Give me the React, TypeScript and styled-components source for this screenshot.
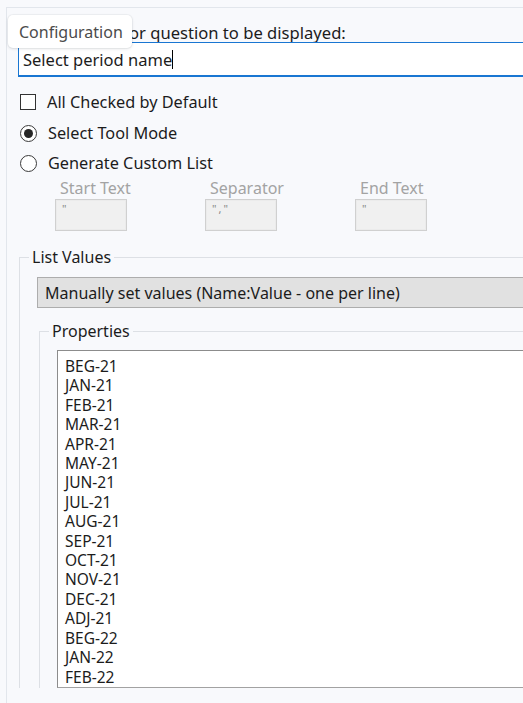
import React from 'react';
import styled, { createGlobalStyle } from 'styled-components';

const periods = [
  'BEG-21', 'JAN-21', 'FEB-21', 'MAR-21', 'APR-21', 'MAY-21', 'JUN-21', 'JUL-21',
  'AUG-21', 'SEP-21', 'OCT-21', 'NOV-21', 'DEC-21', 'ADJ-21', 'BEG-22', 'JAN-22', 'FEB-22',
];

const customFields = [
  { label: 'Start Text', value: '"' },
  { label: 'Separator', value: '","' },
  { label: 'End Text', value: '"' },
];

const App: React.FC = () => {
  return (
    <>
      <GlobalStyle />
      <Page>
        <Tooltip>Configuration</Tooltip>
        <Panel>
          <FieldLabel>Enter the text or question to be displayed:</FieldLabel>
          <TextField>
            Select period name
            <Caret />
          </TextField>

          <OptionRow $top={15}>
            <CheckBox />
            <OptionText>All Checked by Default</OptionText>
          </OptionRow>
          <OptionRow $top={11}>
            <Radio $checked />
            <OptionText>Select Tool Mode</OptionText>
          </OptionRow>
          <OptionRow $top={10}>
            <Radio />
            <OptionText>Generate Custom List</OptionText>
          </OptionRow>

          <CustomGrid>
            {customFields.map((f) => (
              <CustomField key={f.label}>
                <SubLabel>{f.label}</SubLabel>
                <SmallBox>{f.value}</SmallBox>
              </CustomField>
            ))}
          </CustomGrid>

          <Group $top={17} $left={1}>
            <Legend>List Values</Legend>
            <SelectBox>Manually set values (Name:Value - one per line)</SelectBox>
            <Group $top={14} $left={2}>
              <Legend>Properties</Legend>
              <ValuesArea readOnly spellCheck={false} defaultValue={periods.join('\n')} />
            </Group>
          </Group>
        </Panel>
      </Page>
    </>
  );
};

const GlobalStyle = createGlobalStyle`
  html, body {
    margin: 0;
    padding: 0;
    background: #f8f9fc;
    overflow: hidden;
  }
  body {
    font-family: "Segoe UI", "Noto Sans", "Open Sans", sans-serif;
    color: #1c1c1c;
  }
`;

const Page = styled.div`
  position: relative;
  width: 523px;
  height: 703px;
  overflow: hidden;
`;

const Tooltip = styled.div`
  position: absolute;
  left: 8px;
  top: 15px;
  width: 113px;
  height: 33px;
  padding-left: 11px;
  display: flex;
  align-items: center;
  background: #ffffff;
  border-radius: 5px;
  box-shadow: 0 0 0 1px rgba(30, 40, 60, 0.04), 0 1px 3px rgba(30, 40, 60, 0.12);
  font-size: 16px;
  color: #4b4b4b;
  white-space: nowrap;
  z-index: 2;
`;

const Panel = styled.div`
  margin: 7px 0 0 6px;
  width: 760px;
  height: 700px;
  border-top: 1px solid #e2e6ec;
  border-left: 1px solid #e2e6ec;
  padding: 16px 0 0 11px;
  box-sizing: border-box;
  display: flex;
  flex-direction: column;
  align-items: flex-start;
`;

const FieldLabel = styled.div`
  font-size: 16.6px;
  line-height: 18px;
  padding-left: 1px;
  white-space: nowrap;
`;

const TextField = styled.div`
  width: 720px;
  height: 35px;
  box-sizing: border-box;
  border: 1px solid #1976d2;
  border-bottom-width: 2px;
  background: #ffffff;
  padding-left: 4px;
  display: flex;
  align-items: center;
  font-size: 16.5px;
`;

const Caret = styled.span`
  display: inline-block;
  width: 1px;
  height: 19px;
  background: #000000;
`;

const OptionRow = styled.div<{ $top: number }>`
  display: flex;
  align-items: center;
  height: 20px;
  margin-top: ${(p) => p.$top}px;
  padding-left: 2px;
  gap: 11px;
`;

const OptionText = styled.span`
  font-size: 16.3px;
  line-height: 20px;
`;

const CheckBox = styled.span`
  width: 16px;
  height: 16px;
  box-sizing: border-box;
  border: 1px solid #333333;
  background: #ffffff;
`;

const Radio = styled.span<{ $checked?: boolean }>`
  width: 17px;
  height: 17px;
  box-sizing: border-box;
  border-radius: 50%;
  border: 1.5px solid #3a3a3a;
  background: #ffffff;
  display: flex;
  align-items: center;
  justify-content: center;

  &::after {
    content: '';
    display: ${(p) => (p.$checked ? 'block' : 'none')};
    width: 9px;
    height: 9px;
    border-radius: 50%;
    background: #262626;
  }
`;

const CustomGrid = styled.div`
  display: grid;
  grid-template-columns: repeat(3, 150px);
  margin: 6px 0 0 37px;
`;

const CustomField = styled.div`
  display: flex;
  flex-direction: column;
  gap: 2px;
`;

const SubLabel = styled.span`
  font-size: 16px;
  line-height: 18px;
  color: #a3a3a3;
  padding-left: 5px;
  white-space: nowrap;
`;

const SmallBox = styled.div`
  width: 72px;
  height: 32px;
  box-sizing: border-box;
  border: 1px solid #d0d0d0;
  box-shadow: inset 0 0 0 1px #ebebeb;
  background: #f0f0f0;
  font-size: 11px;
  line-height: 12px;
  letter-spacing: 2px;
  color: #888888;
  padding: 3px 0 0 6px;
`;

const Group = styled.fieldset<{ $top: number; $left: number }>`
  margin: ${(p) => p.$top}px 0 0 ${(p) => p.$left}px;
  padding: 0 0 0 17px;
  border: 1px solid #dde0e5;
  border-right: none;
  border-bottom: none;
  min-width: 0;
  width: 720px;
  box-sizing: border-box;
  display: flex;
  flex-direction: column;
  align-items: flex-start;
`;

const Legend = styled.legend`
  margin-left: -8px;
  padding: 0 3px;
  font-size: 16px;
  line-height: 18px;
`;

const SelectBox = styled.div`
  margin-top: 11px;
  width: 700px;
  height: 31px;
  box-sizing: border-box;
  border: 1px solid #adadad;
  background: #e1e1e1;
  padding-left: 7px;
  display: flex;
  align-items: center;
  font-size: 16px;
  white-space: nowrap;
`;

const ValuesArea = styled.textarea`
  margin: 10px 0 0 0;
  width: 700px;
  height: 338px;
  box-sizing: border-box;
  border: 1px solid #a2a2a2;
  border-top-color: #8c8c8c;
  border-left-color: #8c8c8c;
  background: #ffffff;
  padding: 6px 0 0 7px;
  font-family: "Segoe UI", "Noto Sans", "Open Sans", sans-serif;
  font-size: 15.5px;
  line-height: 19.4px;
  color: #1c1c1c;
  resize: none;
  overflow: hidden;
  outline: none;
`;

export default App;
